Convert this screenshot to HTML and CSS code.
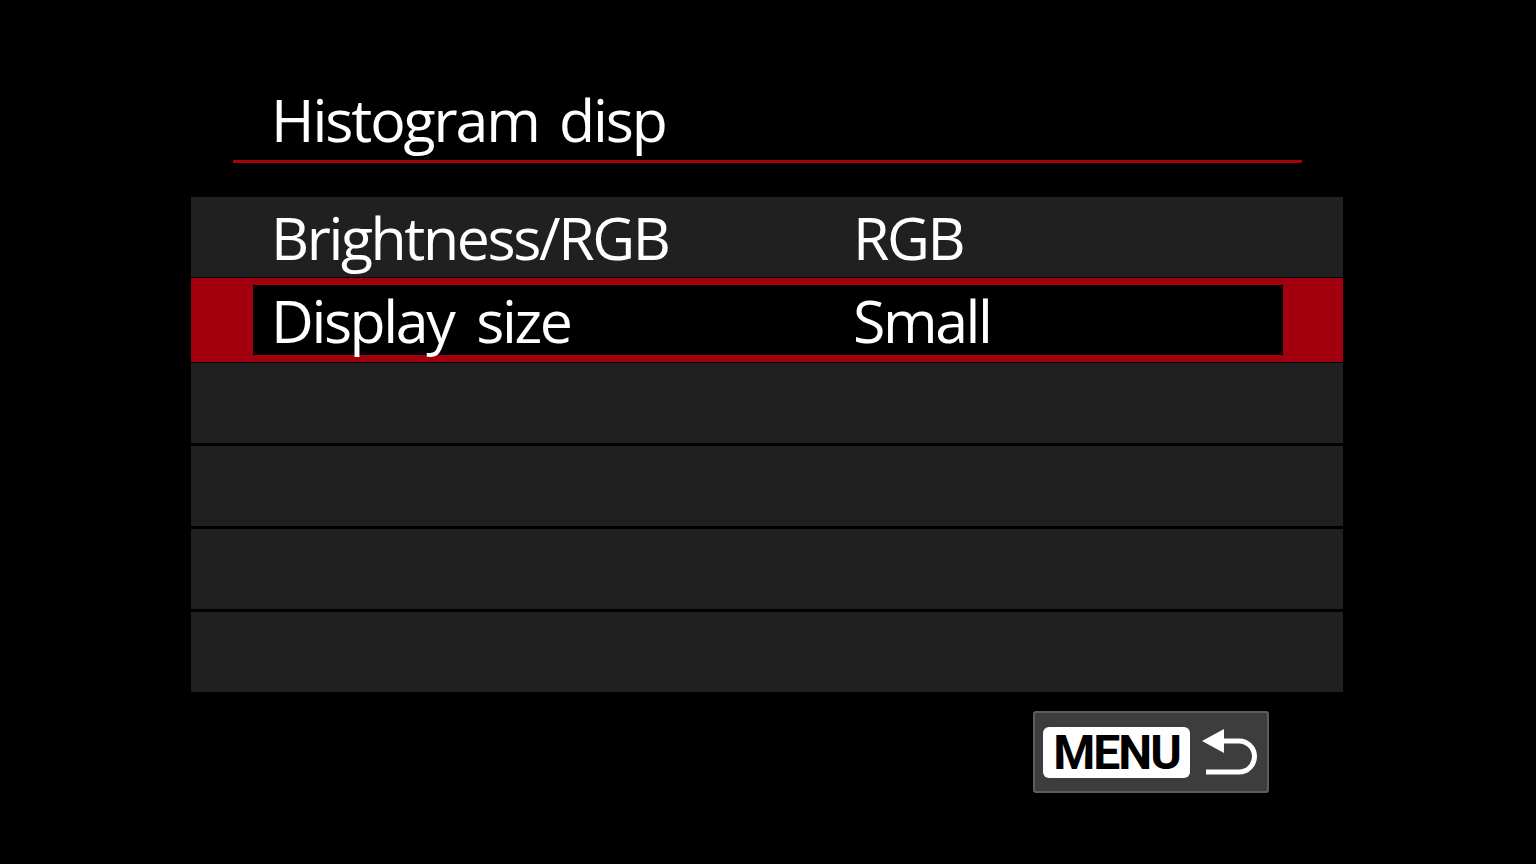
FILE: index.html
```html
<!DOCTYPE html>
<html lang="en">
<head>
<meta charset="utf-8">
<title>Histogram disp</title>
<link rel="stylesheet" href="styles.css">
</head>
<body>
<div class="screen">
  <div class="header">
    <h1 class="title">Histogram disp</h1>
  </div>
  <div class="list">
    <div class="row">
      <span class="label">Brightness/RGB</span>
      <span class="value">RGB</span>
    </div>
    <div class="row selected">
      <div class="sel-inner">
        <span class="label">Display size</span>
        <span class="value">Small</span>
      </div>
    </div>
    <div class="row"></div>
    <div class="row"></div>
    <div class="row"></div>
    <div class="row"></div>
  </div>
  <div class="footer">
    <div class="menu-btn">
      <span class="menu-pill">MENU</span>
      <svg class="back-icon" width="60" height="52" viewBox="0 0 60 52">
        <polygon points="0,15 22,3 22,27" fill="#fff"/>
        <path d="M19 15 H37 A15.5 15.5 0 0 1 37 46 H4" fill="none" stroke="#fff" stroke-width="5"/>
      </svg>
    </div>
  </div>
</div>
</body>
</html>
```

FILE: styles.css
```css
html, body {
  margin: 0;
  padding: 0;
  background: #000;
}

.screen {
  width: 1536px;
  height: 864px;
  background: #000;
  font-family: "Open Sans", "Noto Sans", sans-serif;
  color: #fff;
  overflow: hidden;
}

.header {
  margin-left: 233px;
  width: 1069px;
  height: 160px;
  border-bottom: 3px solid #a8000f;
  box-sizing: content-box;
  display: flex;
  align-items: flex-end;
}

.title {
  margin: 0 0 0 38px;
  font-size: 59px;
  font-weight: 400;
  letter-spacing: -2.1px;
  word-spacing: 7px;
  line-height: 82px;
  padding-bottom: 0;
}

.list {
  margin: 34px 0 0 191px;
  width: 1152px;
  display: flex;
  flex-direction: column;
  gap: 3px;
}

.row {
  height: 80px;
  background: #202020;
  display: grid;
  grid-template-columns: 582px 1fr;
  align-items: center;
  padding-left: 80px;
  font-size: 59px;
  letter-spacing: -2.4px;
  word-spacing: 10px;
  line-height: 80px;
}

.row.selected {
  height: 84px;
  margin: -2px 0;
  padding: 7px 60px 7px 62px;
  background: #a3000f;
  box-sizing: border-box;
  display: flex;
}

.sel-inner {
  flex: 1;
  height: 70px;
  background: #000;
  display: grid;
  grid-template-columns: 582px 1fr;
  align-items: center;
  padding-left: 18px;
  line-height: 70px;
}

.label, .value {
  white-space: nowrap;
}

.footer {
  margin: 19px 0 0 1033px;
}

.menu-btn {
  width: 236px;
  height: 82px;
  box-sizing: border-box;
  border: 2px solid #5e5e5e;
  border-radius: 3px;
  background: #3d3d3d;
  display: flex;
  align-items: center;
  padding-left: 8px;
  gap: 12px;
}

.menu-pill {
  width: 147px;
  height: 51px;
  background: #fff;
  border-radius: 6px;
  color: #000;
  font-family: Roboto, "Liberation Sans", sans-serif;
  font-weight: 700;
  font-size: 48px;
  line-height: 51px;
  text-align: center;
  letter-spacing: -2px;
}

.back-icon {
  display: block;
}
```
